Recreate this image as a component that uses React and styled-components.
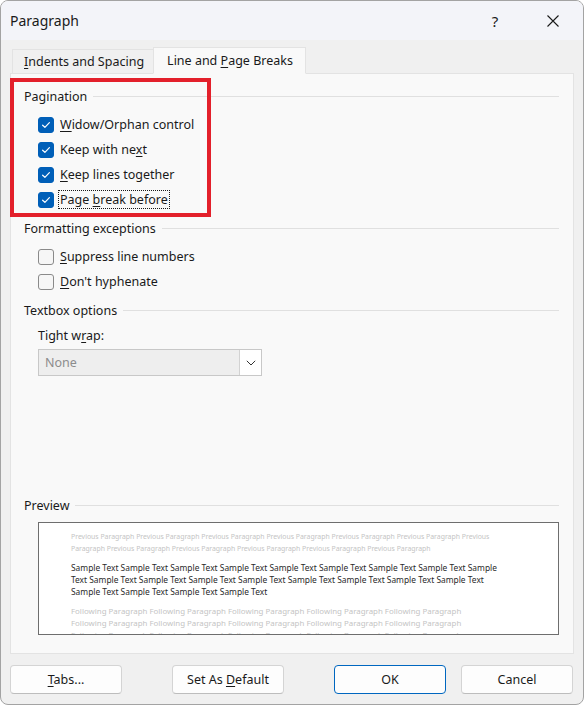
import React from "react";
import styled, { createGlobalStyle } from "styled-components";

const GlobalStyle = createGlobalStyle`
  html, body {
    margin: 0;
    padding: 0;
    background: #ffffff;
  }
  body {
    font-family: "Noto Sans", "Open Sans", sans-serif;
    color: #1a1a1a;
  }
`;

const previousLines = [
  "Previous Paragraph Previous Paragraph Previous Paragraph Previous Paragraph Previous Paragraph Previous Paragraph Previous",
  "Paragraph Previous Paragraph Previous Paragraph Previous Paragraph Previous Paragraph Previous Paragraph",
];

const sampleLines = [
  "Sample Text Sample Text Sample Text Sample Text Sample Text Sample Text Sample Text Sample Text Sample",
  "Text Sample Text Sample Text Sample Text Sample Text Sample Text Sample Text Sample Text Sample Text",
  "Sample Text Sample Text Sample Text Sample Text",
];

const followingLines = [
  "Following Paragraph Following Paragraph Following Paragraph Following Paragraph Following Paragraph",
  "Following Paragraph Following Paragraph Following Paragraph Following Paragraph Following Paragraph",
  "Following Paragraph Following Paragraph Following Paragraph Following Paragraph Following Paragraph",
];

const CheckIcon = () => (
  <svg width="10" height="10" viewBox="0 0 10 10">
    <path d="M1.6 5.2 L3.9 7.3 L8.4 2.6" fill="none" stroke="#fff" strokeWidth="1.2" strokeLinecap="round" strokeLinejoin="round" />
  </svg>
);

const ChevronDown = () => (
  <svg width="10" height="6" viewBox="0 0 10 6">
    <path d="M0.8 0.8 L5 5 L9.2 0.8" fill="none" stroke="#333" strokeWidth="1" />
  </svg>
);

function CheckRow({ checked, focused, children }) {
  return (
    <Row>
      <Box checked={checked}>{checked && <CheckIcon />}</Box>
      <RowLabel focused={focused}>{children}</RowLabel>
    </Row>
  );
}

export default function App() {
  return (
    <>
      <GlobalStyle />
      <Window>
        <TitleBar>
          <Title>Paragraph</Title>
          <TitleButtons>
            <HelpGlyph>?</HelpGlyph>
            <CloseButton>
              <svg width="12" height="12" viewBox="0 0 12 12">
                <path d="M0.5 0.5 L11.5 11.5 M11.5 0.5 L0.5 11.5" stroke="#1a1a1a" strokeWidth="1.1" />
              </svg>
            </CloseButton>
          </TitleButtons>
        </TitleBar>

        <Body>
          <TabStrip>
            <Tab>
              <u>I</u>ndents and Spacing
            </Tab>
            <Tab active>
              Line and <u>P</u>age Breaks
            </Tab>
          </TabStrip>

          <Panel>
            <Highlight />

            <GroupHeader>
              <span>Pagination</span>
              <Rule />
            </GroupHeader>
            <Rows>
              <CheckRow checked>
                <u>W</u>idow/Orphan control
              </CheckRow>
              <CheckRow checked>
                Keep with ne<u>x</u>t
              </CheckRow>
              <CheckRow checked>
                <u>K</u>eep lines together
              </CheckRow>
              <CheckRow checked focused>
                Page <u>b</u>reak before
              </CheckRow>
            </Rows>

            <GroupHeader gap={7}>
              <span>Formatting exceptions</span>
              <Rule />
            </GroupHeader>
            <Rows>
              <CheckRow>
                <u>S</u>uppress line numbers
              </CheckRow>
              <CheckRow>
                <u>D</u>on't hyphenate
              </CheckRow>
            </Rows>

            <GroupHeader gap={7}>
              <span>Textbox options</span>
              <Rule />
            </GroupHeader>
            <FieldLabel>
              Tight w<u>r</u>ap:
            </FieldLabel>
            <Select>
              <SelectValue>None</SelectValue>
              <SelectArrow>
                <ChevronDown />
              </SelectArrow>
            </Select>

            <PreviewGroup>
              <GroupHeader gap={0}>
                <span>Preview</span>
                <Rule />
              </GroupHeader>
              <PreviewBox>
                <PreviewPara>
                  {previousLines.map((l, i) => (
                    <PreviewLine key={i} size={6.9}>{l}</PreviewLine>
                  ))}
                </PreviewPara>
                <PreviewPara>
                  {sampleLines.map((l, i) => (
                    <PreviewLine key={i} size={8.4} dark>{l}</PreviewLine>
                  ))}
                </PreviewPara>
                <PreviewPara>
                  {followingLines.map((l, i) => (
                    <PreviewLine key={i} size={7.9}>{l}</PreviewLine>
                  ))}
                </PreviewPara>
              </PreviewBox>
            </PreviewGroup>
          </Panel>

          <ButtonBar>
            <Button>
              <u>T</u>abs...
            </Button>
            <Button offset={50}>
              Set As <u>D</u>efault
            </Button>
            <Button offset={50} primary>OK</Button>
            <Button offset={15}>Cancel</Button>
          </ButtonBar>
        </Body>
      </Window>
    </>
  );
}

const Window = styled.div`
  width: 584px;
  height: 705px;
  box-sizing: border-box;
  border: 1px solid #a3a3a3;
  border-radius: 8px;
  background: #f0f0f0;
  overflow: hidden;
  display: flex;
  flex-direction: column;
`;

const TitleBar = styled.div`
  height: 39px;
  display: flex;
  align-items: center;
  justify-content: space-between;
  padding: 0 0 0 9px;
  background: #f3f4f9;
`;

const Title = styled.div`
  font-size: 14px;
  color: #1a1a1a;
`;

const TitleButtons = styled.div`
  display: flex;
  align-items: center;
`;

const HelpGlyph = styled.div`
  width: 46px;
  text-align: center;
  font-size: 15px;
  color: #1a1a1a;
  margin-right: 12px;
`;

const CloseButton = styled.div`
  width: 46px;
  display: flex;
  justify-content: center;
  margin-right: 7px;
`;

const Body = styled.div`
  flex: 1;
  display: flex;
  flex-direction: column;
  padding: 7px 9px 0 9px;
`;

const TabStrip = styled.div`
  display: flex;
  align-items: flex-end;
  height: 27px;
  padding-left: 2px;
  position: relative;
  z-index: 1;
  margin-bottom: -1px;
`;

const Tab = styled.div`
  box-sizing: border-box;
  height: ${(p) => (p.active ? 27 : 25)}px;
  line-height: ${(p) => (p.active ? 25 : 23)}px;
  padding: 0 ${(p) => (p.active ? "12px 0 13px" : "9px 0 11px")};
  font-size: 12.5px;
  color: #1a1a1a;
  white-space: nowrap;
  border: 1px solid #e3e3e3;
  border-bottom: ${(p) => (p.active ? "1px solid #f9f9f9" : "1px solid #e3e3e3")};
  background: ${(p) => (p.active ? "#f9f9f9" : "#f0f0f0")};
  margin-left: ${(p) => (p.active ? "-1px" : "0")};
  & u {
    text-underline-offset: 2px;
  }
`;

const Panel = styled.div`
  position: relative;
  box-sizing: border-box;
  height: 581px;
  background: #f9f9f9;
  border: 1px solid #e3e3e3;
  display: flex;
  flex-direction: column;
  padding: 13px 14px 18px 13px;
  font-size: 12.5px;
`;

const Highlight = styled.div`
  position: absolute;
  left: -1px;
  top: 4px;
  width: 201px;
  height: 139px;
  box-sizing: border-box;
  border: 4px solid #e3202b;
  pointer-events: none;
`;

const GroupHeader = styled.div`
  display: flex;
  align-items: center;
  height: 18px;
  margin-top: ${(p) => (p.gap ?? 0)}px;
  color: #1a1a1a;
  font-size: 12.5px;
`;

const Rule = styled.div`
  flex: 1;
  height: 1px;
  background: #e0e0e0;
  margin-left: 6px;
`;

const Rows = styled.div`
  display: flex;
  flex-direction: column;
  padding-left: 14px;
  margin-top: 7px;
`;

const Row = styled.div`
  height: 25px;
  display: flex;
  align-items: center;
  gap: 5px;
`;

const Box = styled.div`
  width: 16px;
  height: 16px;
  box-sizing: border-box;
  border-radius: 3px;
  display: flex;
  align-items: center;
  justify-content: center;
  background: ${(p) => (p.checked ? "#005fb8" : "#f6f6f6")};
  border: 1px solid ${(p) => (p.checked ? "#005fb8" : "#8a8a8a")};
`;

const RowLabel = styled.span`
  font-size: 12.5px;
  color: #1a1a1a;
  padding: 0 1px;
  line-height: 17px;
  white-space: nowrap;
  outline: ${(p) => (p.focused ? "1px dotted #1a1a1a" : "none")};
  & u {
    text-underline-offset: 2px;
  }
`;

const FieldLabel = styled.div`
  margin-top: 8px;
  padding-left: 14px;
  height: 18px;
  line-height: 18px;
  font-size: 12.5px;
  & u {
    text-underline-offset: 2px;
  }
`;

const Select = styled.div`
  margin: 4px 0 0 14px;
  width: 224px;
  height: 27px;
  box-sizing: border-box;
  border: 1px solid #c8c8c8;
  background: #eeeeee;
  display: flex;
  align-items: stretch;
`;

const SelectValue = styled.div`
  flex: 1;
  padding-left: 6px;
  display: flex;
  align-items: center;
  color: #8c8c8c;
  font-size: 12.5px;
`;

const SelectArrow = styled.div`
  width: 21px;
  background: #ffffff;
  border-left: 1px solid #d2d2d2;
  display: flex;
  align-items: center;
  justify-content: center;
`;

const PreviewGroup = styled.div`
  margin-top: auto;
  display: flex;
  flex-direction: column;
`;

const PreviewBox = styled.div`
  margin: 8px 0 0 14px;
  height: 113px;
  box-sizing: border-box;
  border: 1px solid #6e6e6e;
  background: #ffffff;
  overflow: hidden;
  padding: 8px 0 0 32px;
  display: flex;
  flex-direction: column;
  gap: 7px;
`;

const PreviewPara = styled.div`
  display: flex;
  flex-direction: column;
`;

const PreviewLine = styled.div`
  font-size: ${(p) => p.size}px;
  line-height: 12px;
  white-space: nowrap;
  color: ${(p) => (p.dark ? "#2a2a2a" : "#c4c4c4")};
`;

const ButtonBar = styled.div`
  display: flex;
  margin-top: 11px;
`;

const Button = styled.div`
  flex-shrink: 0;
  width: 112px;
  height: 29px;
  margin-left: ${(p) => p.offset || 0}px;
  box-sizing: border-box;
  border-radius: 4px;
  background: #fdfdfd;
  border: 1px solid ${(p) => (p.primary ? "#0067c0" : "#d4d4d4")};
  border-bottom-color: ${(p) => (p.primary ? "#0067c0" : "#bdbdbd")};
  text-align: center;
  line-height: 27px;
  font-size: 12.5px;
  color: #1a1a1a;
  white-space: nowrap;
  & u {
    text-underline-offset: 2px;
  }
`;
